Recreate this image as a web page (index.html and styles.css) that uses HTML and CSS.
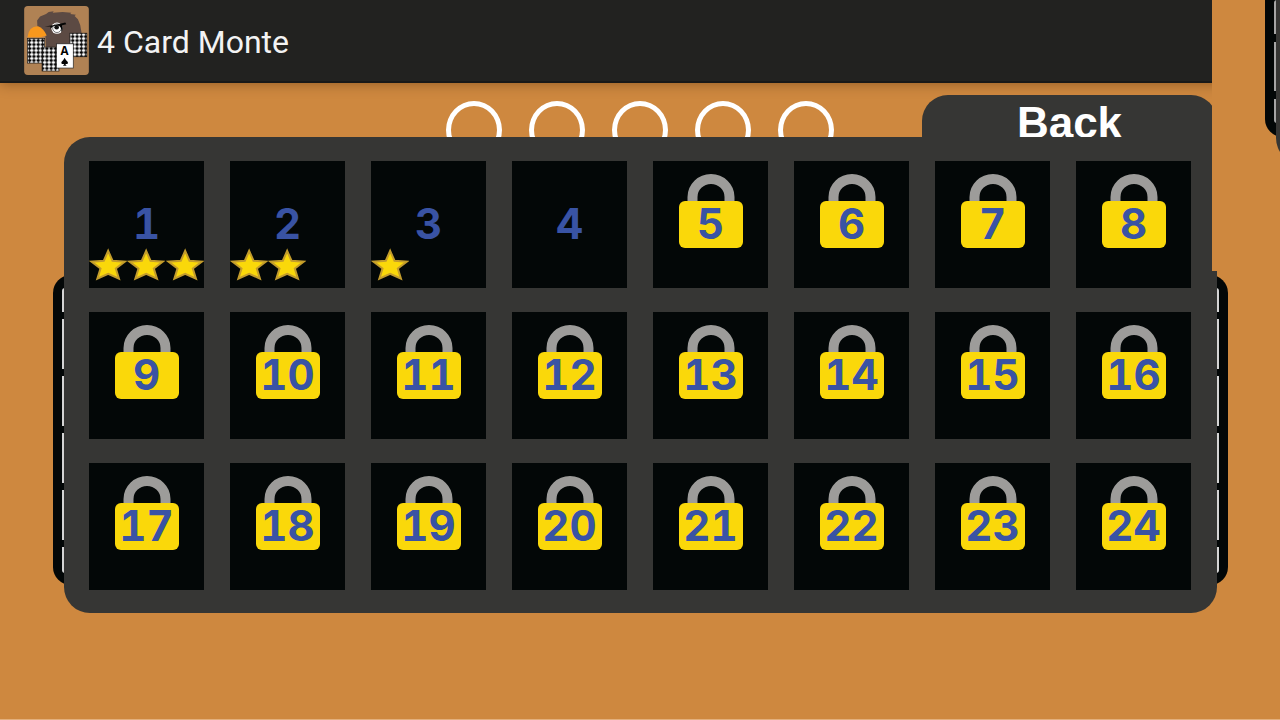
FILE: index.html
```html
<!DOCTYPE html>
<html lang="en">
<head>
  <meta charset="utf-8">
  <title>4 Card Monte</title>
  <meta name="viewport" content="width=device-width, initial-scale=1.0">
  <link rel="stylesheet" href="styles.css">
</head>
<body>
  <!-- shared shapes -->
  <svg class="shapes" aria-hidden="true">
    <symbol id="lock" viewBox="0 0 64 74">
      <path d="M13.500 30V23a18.500 18 0 0 1 37 0V30" fill="none" stroke="#9d9c9a" stroke-width="10"/>
      <rect x="0" y="27" width="64" height="47" rx="6" fill="#fad80a"/>
    </symbol>
    <symbol id="star" viewBox="0 0 38 32">
      <path d="M19 2.500L23.300 12.300L35.500 13.200L26.600 20L29.700 30L19 25.200L8.300 30L11.400 20L2.500 13.200L14.700 12.300Z" fill="#fad80a" stroke="#c39c2c" stroke-width="2"/>
    </symbol>
  </svg>

  <header class="action-bar">
    <svg class="app-icon" viewBox="12 18 195 208" aria-hidden="true">
      <defs>
        <pattern id="dots" x="22" y="116" width="13" height="12" patternUnits="userSpaceOnUse">
          <rect width="13" height="12" fill="#fff"/>
          <path d="M0 6H13M6.500 0V12" stroke="#050505" stroke-width="2"/>
          <circle cx="6.500" cy="6" r="4.700" fill="#050505"/>
        </pattern>
      </defs>
      <rect x="12" y="18" width="195" height="208" rx="11" fill="#b08254"/>
      <path d="M52 82L51 62L60 50L78 42L86 36L101 34L98 38L128 36L154 38L151 42L168 44L164 48L174 58L181 75L186 105L150 140L78 142L76 106Z" fill="#5c4a43"/>
      <path d="M22 112Q26 78 54 79Q70 84 80 107L62 112Z" fill="#f8981d"/>
      <circle cx="111" cy="85" r="17" fill="#fff"/>
      <circle cx="111" cy="85" r="13" fill="none" stroke="#333" stroke-width="2"/>
      <circle cx="110" cy="82" r="7" fill="#111"/>
      <path d="M74 80Q103 77 136 68L139 73L126 76Q132 89 124 96Q126 80 113 77Q98 77 92 87L91 80Z" fill="#050505"/>
      <g stroke="#111" stroke-width="2" fill="url(#dots)">
        <rect x="22" y="116" width="52" height="74"/>
        <rect x="150" y="100" width="51" height="71"/>
        <rect x="66" y="142" width="51" height="72"/>
      </g>
      <rect x="110" y="132" width="50" height="73" fill="#fff" stroke="#222" stroke-width="2"/>
      <text class="icon-letter" x="134" y="167" text-anchor="middle">A</text>
      <path d="M134 174Q137 181 143 186Q147 194 136 193L140 198H129L133 193Q121 194 125 186Q131 181 134 174Z" fill="#050505"/>
    </svg>
    <h1 class="title">4 Card Monte</h1>
  </header>

  <main class="game">
    <div class="top-row">
      <div class="rounds">
        <span class="round"></span>
        <span class="round"></span>
        <span class="round"></span>
        <span class="round"></span>
        <span class="round"></span>
      </div>
      <button class="back" type="button">Back</button>
    </div>

    <div class="board">
      <div class="table-card"><div class="stripes"></div></div>
      <div class="levels" id="levels"></div>
    </div>
  </main>

  <!-- edge of the next screen -->
  <div class="next-screen">
    <div class="next-card"><div class="stripes"></div></div>
    <div class="next-panel"></div>
  </div>

  <script src="levels.js"></script>
</body>
</html>
```
FILE: styles.css
```css
* {
  box-sizing: border-box;
}

body {
  position: relative;
  min-height: 100vh;
  margin: 0;
  overflow: hidden;
  background-color: #ce883f;
  border-bottom: 1px solid #e3b07c;
  font-family: Roboto, "Liberation Sans", sans-serif;
}

.shapes {
  position: absolute;
  width: 0;
  height: 0;
}

.action-bar {
  display: flex;
  align-items: center;
  gap: 8px;
  height: 83px;
  padding: 0 24px;
  background-color: #222220;
  border-bottom: 2px solid #191918;
  box-shadow: 0 1px 12px rgba(60, 30, 0, 0.4);
}

.app-icon {
  width: 65px;
  height: 69px;
}

.icon-letter {
  font-family: "Open Sans", sans-serif;
  font-size: 35px;
  font-weight: bold;
}

.title {
  margin: 0;
  padding-top: 2px;
  color: #f3f3f3;
  font-size: 32px;
  font-weight: 400;
  line-height: 40px;
}

/* rounds and back tab share one cell, the board covers their lower part */
.top-row {
  display: grid;
  height: 54px;
  padding-top: 12px;
}

.rounds {
  grid-area: 1 / 1;
  justify-self: center;
  display: flex;
  gap: 27px;
  padding-top: 6px;
}

.round {
  width: 56px;
  height: 58px;
  border: 5px solid #fff;
  border-radius: 50%;
}

.back {
  grid-area: 1 / 1;
  justify-self: end;
  width: 295px;
  height: 56px;
  margin-right: 63px;
  padding: 0;
  border: 0;
  border-radius: 26px 26px 0 0;
  background-color: #363634;
  color: #fff;
  font-family: "Liberation Sans", Arial, sans-serif;
  font-size: 44px;
  font-weight: bold;
  line-height: 56px;
}

.board {
  position: relative;
  padding: 0 63px 0 64px;
}

.table-card {
  position: absolute;
  top: 138px;
  bottom: 28px;
  left: 53px;
  right: 52px;
  padding: 13px 9px 12px;
  border-radius: 18px;
  background-color: #030707;
}

.stripes {
  height: 100%;
  border-radius: 3px;
  background-image: linear-gradient(#d4d4d4 50px, #030707 50px);
  background-size: 100% 57px;
  background-position: 0 -26px;
}

.levels {
  position: relative;
  display: grid;
  grid-template-columns: repeat(8, 1fr);
  grid-auto-rows: 127px;
  gap: 24px 26px;
  padding: 24px 26px 23px 25px;
  border-radius: 26px 0 26px 26px;
  background-color: #363634;
}

.level {
  display: grid;
  grid-template: 100% / 100%;
  padding: 0;
  border: 0;
  background-color: #030707;
  color: #3953a4;
  font-family: Inter, sans-serif;
  font-size: 42px;
  font-weight: bold;
  font-variant-numeric: tabular-nums;
}

.lock,
.number,
.stars {
  grid-area: 1 / 1;
}

.lock {
  justify-self: center;
  width: 64px;
  height: 74px;
  margin-top: 13px;
}

.number {
  place-self: center;
  padding-bottom: 2px;
  z-index: 1;
}

.stars {
  align-self: end;
  display: grid;
  grid-template-columns: repeat(3, 1fr);
  padding-bottom: 7px;
}

.star {
  width: 100%;
  height: 33px;
}

.next-screen {
  position: absolute;
  top: 0;
  right: 0;
  width: 68px;
  height: 271px;
  overflow: hidden;
  background-color: #ce883f;
}

.next-card {
  position: absolute;
  top: 0;
  left: 53px;
  width: 60px;
  height: 137px;
  padding: 0 9px 14px;
  border-bottom-left-radius: 18px;
  background-color: #030707;
}

.next-card .stripes {
  background-image: linear-gradient(#a5a5a5 49px, #030707 49px);
  background-position: 0 -15px;
}

.next-panel {
  position: absolute;
  top: 0;
  left: 64px;
  width: 60px;
  height: 164px;
  border-bottom-left-radius: 26px;
  background-color: #363634;
}
```
FILE: levels.js
```js
var LEVEL_COUNT = 24;
var UNLOCKED = 4;
var stars = { 1: 3, 2: 2, 3: 1 };

var grid = document.getElementById("levels");

for (var n = 1; n <= LEVEL_COUNT; n++) {
  var html = "";

  if (n > UNLOCKED) {
    html += '<svg class="lock" aria-hidden="true"><use href="#lock"></use></svg>';
  }

  html += '<span class="number">' + n + '</span>';

  if (stars[n]) {
    html += '<span class="stars">';
    for (var s = 0; s < stars[n]; s++) {
      html += '<svg class="star" aria-hidden="true"><use href="#star"></use></svg>';
    }
    html += '</span>';
  }

  var button = document.createElement("button");
  button.type = "button";
  button.className = "level";
  button.innerHTML = html;
  grid.appendChild(button);
}
```
